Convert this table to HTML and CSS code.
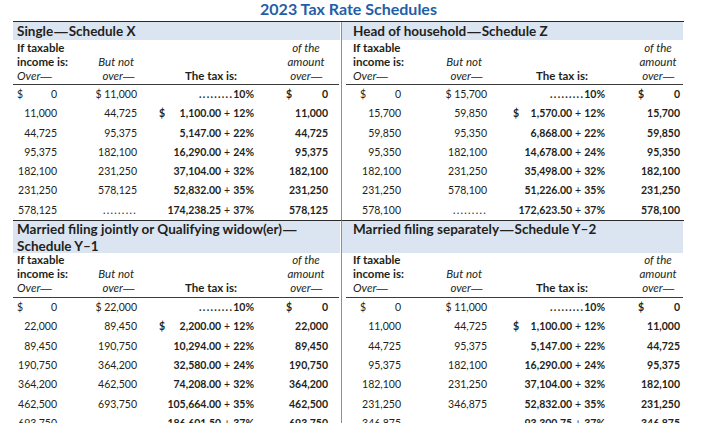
FILE: index.html
```html
<!DOCTYPE html>
<html lang="en">
<head>
<meta charset="utf-8">
<title>2023 Tax Rate Schedules</title>
<link rel="stylesheet" href="styles.css">
</head>
<body>
<h1 class="title">2023 Tax Rate Schedules</h1>
<div class="schedules">

  <section class="panel left top">
    <h2 class="heading">Single<span class="dash">—</span>Schedule X</h2>
    <div class="colhead">
      <div class="h1c"><b>If taxable<br>income is:</b><br><i>Over<span class="dash">—</span></i></div>
      <div class="h2c"><i>But not<br>over<span class="dash">—</span></i></div>
      <div class="h3c"><b>The tax is:</b></div>
      <div class="h4c"><i>of the<br>amount<br>over<span class="dash">—</span></i></div>
    </div>
    <div class="rows">
      <div class="row"><span class="c1"><span class="cur">$</span>0</span><span class="c2">$ 11,000</span><span class="c3"><span class="dots">.........</span>10%</span><span class="c4"><span class="cur">$</span>0</span></div>
      <div class="row"><span class="c1">11,000</span><span class="c2">44,725</span><span class="c3"><span class="cur">$</span>1,100.00<span class="plus">+</span>12%</span><span class="c4">11,000</span></div>
      <div class="row"><span class="c1">44,725</span><span class="c2">95,375</span><span class="c3">5,147.00<span class="plus">+</span>22%</span><span class="c4">44,725</span></div>
      <div class="row"><span class="c1">95,375</span><span class="c2">182,100</span><span class="c3">16,290.00<span class="plus">+</span>24%</span><span class="c4">95,375</span></div>
      <div class="row"><span class="c1">182,100</span><span class="c2">231,250</span><span class="c3">37,104.00<span class="plus">+</span>32%</span><span class="c4">182,100</span></div>
      <div class="row"><span class="c1">231,250</span><span class="c2">578,125</span><span class="c3">52,832.00<span class="plus">+</span>35%</span><span class="c4">231,250</span></div>
      <div class="row"><span class="c1">578,125</span><span class="c2"><span class="dots">.........</span></span><span class="c3">174,238.25<span class="plus">+</span>37%</span><span class="c4">578,125</span></div>
    </div>
  </section>

  <section class="panel right top">
    <h2 class="heading">Head of household<span class="dash">—</span>Schedule Z</h2>
    <div class="colhead">
      <div class="h1c"><b>If taxable<br>income is:</b><br><i>Over<span class="dash">—</span></i></div>
      <div class="h2c"><i>But not<br>over<span class="dash">—</span></i></div>
      <div class="h3c"><b>The tax is:</b></div>
      <div class="h4c"><i>of the<br>amount<br>over<span class="dash">—</span></i></div>
    </div>
    <div class="rows">
      <div class="row"><span class="c1"><span class="cur">$</span>0</span><span class="c2">$ 15,700</span><span class="c3"><span class="dots">.........</span>10%</span><span class="c4"><span class="cur">$</span>0</span></div>
      <div class="row"><span class="c1">15,700</span><span class="c2">59,850</span><span class="c3"><span class="cur">$</span>1,570.00<span class="plus">+</span>12%</span><span class="c4">15,700</span></div>
      <div class="row"><span class="c1">59,850</span><span class="c2">95,350</span><span class="c3">6,868.00<span class="plus">+</span>22%</span><span class="c4">59,850</span></div>
      <div class="row"><span class="c1">95,350</span><span class="c2">182,100</span><span class="c3">14,678.00<span class="plus">+</span>24%</span><span class="c4">95,350</span></div>
      <div class="row"><span class="c1">182,100</span><span class="c2">231,250</span><span class="c3">35,498.00<span class="plus">+</span>32%</span><span class="c4">182,100</span></div>
      <div class="row"><span class="c1">231,250</span><span class="c2">578,100</span><span class="c3">51,226.00<span class="plus">+</span>35%</span><span class="c4">231,250</span></div>
      <div class="row"><span class="c1">578,100</span><span class="c2"><span class="dots">.........</span></span><span class="c3">172,623.50<span class="plus">+</span>37%</span><span class="c4">578,100</span></div>
    </div>
  </section>

  <section class="panel left bottom">
    <h2 class="heading">Married filing jointly or Qualifying widow(er)<span class="dash">—</span><br>Schedule Y–1</h2>
    <div class="colhead">
      <div class="h1c"><b>If taxable<br>income is:</b><br><i>Over<span class="dash">—</span></i></div>
      <div class="h2c"><i>But not<br>over<span class="dash">—</span></i></div>
      <div class="h3c"><b>The tax is:</b></div>
      <div class="h4c"><i>of the<br>amount<br>over<span class="dash">—</span></i></div>
    </div>
    <div class="rows">
      <div class="row"><span class="c1"><span class="cur">$</span>0</span><span class="c2">$ 22,000</span><span class="c3"><span class="dots">.........</span>10%</span><span class="c4"><span class="cur">$</span>0</span></div>
      <div class="row"><span class="c1">22,000</span><span class="c2">89,450</span><span class="c3"><span class="cur">$</span>2,200.00<span class="plus">+</span>12%</span><span class="c4">22,000</span></div>
      <div class="row"><span class="c1">89,450</span><span class="c2">190,750</span><span class="c3">10,294.00<span class="plus">+</span>22%</span><span class="c4">89,450</span></div>
      <div class="row"><span class="c1">190,750</span><span class="c2">364,200</span><span class="c3">32,580.00<span class="plus">+</span>24%</span><span class="c4">190,750</span></div>
      <div class="row"><span class="c1">364,200</span><span class="c2">462,500</span><span class="c3">74,208.00<span class="plus">+</span>32%</span><span class="c4">364,200</span></div>
      <div class="row"><span class="c1">462,500</span><span class="c2">693,750</span><span class="c3">105,664.00<span class="plus">+</span>35%</span><span class="c4">462,500</span></div>
      <div class="row"><span class="c1">693,750</span><span class="c2"><span class="dots">.........</span></span><span class="c3">186,601.50<span class="plus">+</span>37%</span><span class="c4">693,750</span></div>
    </div>
  </section>

  <section class="panel right bottom">
    <h2 class="heading">Married filing separately<span class="dash">—</span>Schedule Y–2</h2>
    <div class="colhead">
      <div class="h1c"><b>If taxable<br>income is:</b><br><i>Over<span class="dash">—</span></i></div>
      <div class="h2c"><i>But not<br>over<span class="dash">—</span></i></div>
      <div class="h3c"><b>The tax is:</b></div>
      <div class="h4c"><i>of the<br>amount<br>over<span class="dash">—</span></i></div>
    </div>
    <div class="rows">
      <div class="row"><span class="c1"><span class="cur">$</span>0</span><span class="c2">$ 11,000</span><span class="c3"><span class="dots">.........</span>10%</span><span class="c4"><span class="cur">$</span>0</span></div>
      <div class="row"><span class="c1">11,000</span><span class="c2">44,725</span><span class="c3"><span class="cur">$</span>1,100.00<span class="plus">+</span>12%</span><span class="c4">11,000</span></div>
      <div class="row"><span class="c1">44,725</span><span class="c2">95,375</span><span class="c3">5,147.00<span class="plus">+</span>22%</span><span class="c4">44,725</span></div>
      <div class="row"><span class="c1">95,375</span><span class="c2">182,100</span><span class="c3">16,290.00<span class="plus">+</span>24%</span><span class="c4">95,375</span></div>
      <div class="row"><span class="c1">182,100</span><span class="c2">231,250</span><span class="c3">37,104.00<span class="plus">+</span>32%</span><span class="c4">182,100</span></div>
      <div class="row"><span class="c1">231,250</span><span class="c2">346,875</span><span class="c3">52,832.00<span class="plus">+</span>35%</span><span class="c4">231,250</span></div>
      <div class="row"><span class="c1">346,875</span><span class="c2"><span class="dots">.........</span></span><span class="c3">93,300.75<span class="plus">+</span>37%</span><span class="c4">346,875</span></div>
    </div>
  </section>

</div>
</body>
</html>
```

FILE: styles.css
```css
html, body {
  margin: 0;
  padding: 0;
  background: #ffffff;
}

body {
  font-family: Lato, "Liberation Sans", sans-serif;
  color: #231f20;
  overflow: hidden;
}

.title {
  margin: 0 0 0 13px;
  width: 671px;
  height: 21px;
  text-align: center;
  font-size: 16px;
  line-height: 18px;
  font-weight: 700;
  color: #1f5ea8;
}

.schedules {
  margin-left: 13px;
  width: 671px;
  display: grid;
  grid-template-columns: 328px 343px;
  border-top: 1px solid #2a2a2a;
}

.left {
  --cols: 40px 80px 117px 74px;
}

.right {
  --cols: 48px 86px 118px 75px;
  border-left: 1px solid #8f8f8f;
}

.top {
  border-bottom: 1px solid #2a2a2a;
}

.heading {
  margin: 0 1px 0 0;
  height: 18px;
  font-size: 13.5px;
  line-height: 18px;
  font-weight: 700;
  background: #dbe5f1;
  padding-left: 4px;
  white-space: nowrap;
}

.right .heading {
  padding-left: 11px;
}

.bottom .heading {
  height: 32px;
  line-height: 16px;
}

.dash {
  font-family: "Liberation Sans", sans-serif;
  letter-spacing: -0.5px;
}

.heading .dash {
  padding: 0 1px;
  letter-spacing: 0;
}

.colhead {
  display: grid;
  grid-template-columns: var(--cols);
  align-items: end;
  font-size: 11.5px;
  line-height: 14px;
  padding-top: 1px;
  padding-bottom: 1px;
  border-bottom: 1px solid #3c3c3c;
}

.bottom .colhead {
  padding-top: 0;
  padding-bottom: 2px;
}

.left .colhead {
  margin-right: 2px;
  padding-left: 4px;
}

.right .colhead {
  margin-left: 4px;
  margin-right: 1px;
  padding-left: 7px;
}

.colhead i {
  font-weight: 400;
}

.h1c {
  text-align: left;
  white-space: nowrap;
}

.h2c {
  text-align: right;
  padding-right: 3px;
  white-space: nowrap;
}

.right .h2c {
  padding-right: 5px;
}

.h3c {
  text-align: right;
  padding-right: 17px;
  white-space: nowrap;
}

.h4c {
  text-align: center;
  padding-left: 30px;
  white-space: nowrap;
}

.right .h4c {
  padding-left: 31px;
}

.rows {
  padding-left: 4px;
}

.right .rows {
  padding-left: 11px;
}

.row {
  display: grid;
  grid-template-columns: var(--cols);
  height: 19.3px;
  font-size: 10.5px;
  line-height: 19.3px;
  white-space: nowrap;
}

.row > span {
  display: flex;
  justify-content: flex-end;
}

.cur {
  margin-right: auto;
}

.plus {
  padding: 0 3px;
  font-weight: 400;
}

.dots {
  letter-spacing: 1.3px;
}

.c3,
.c4 {
  font-weight: 700;
}

.left .c3 {
  padding-left: 22px;
}

.left .c4 {
  padding-left: 32px;
}

.right .c1 {
  padding-left: 7px;
}

.right .c3 {
  padding-left: 26px;
}

.right .c4 {
  padding-left: 33px;
}
```
